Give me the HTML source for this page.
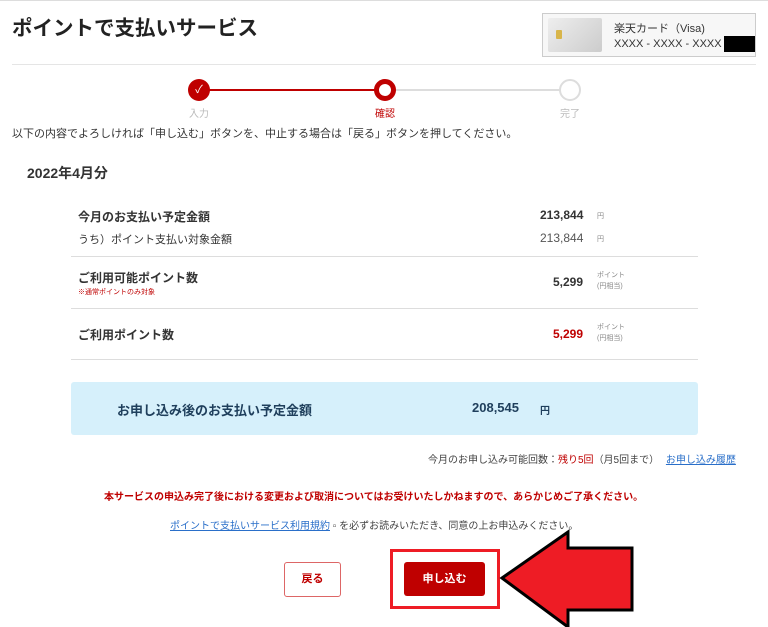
<!DOCTYPE html>
<html><head><meta charset="utf-8"><style>
*{margin:0;padding:0;box-sizing:border-box}
body{width:768px;height:627px;overflow:hidden;background:#fff;font-family:"Liberation Sans","Noto Sans CJK JP",sans-serif;color:#333;position:relative}
.a{position:absolute;white-space:nowrap}
</style></head><body>
<div class="a" style="left:0;top:0;width:768px;height:1px;background:#ddd"></div>
<div class="a" style="left:12px;top:11px;font-size:20.5px;font-weight:bold;color:#222">ポイントで支払いサービス</div>
<div class="a" style="left:542px;top:13px;width:214px;height:44px;border:1px solid #ccc;background:#f7f7f7"></div>
<div class="a" style="left:548px;top:18px;width:54px;height:34px;background:linear-gradient(135deg,#eee,#ccc);border-radius:2px"></div>
<div class="a" style="left:556px;top:30px;width:6px;height:9px;background:#d8b54a;border-radius:1px"></div>
<div class="a" style="left:614px;top:20px;font-size:11px;color:#333">楽天カード（Visa)</div>
<div class="a" style="left:614px;top:38px;font-size:11px;color:#333">XXXX - XXXX - XXXX -</div>
<div class="a" style="left:724px;top:36px;width:31px;height:16px;background:#000"></div>
<div class="a" style="left:12px;top:64px;width:744px;height:1px;background:#e5e5e5"></div>
<div class="a" style="left:199px;top:89px;width:186px;height:2px;background:#bf0000"></div>
<div class="a" style="left:385px;top:89px;width:184px;height:2px;background:#ddd"></div>
<div class="a" style="left:188px;top:79px;width:22px;height:22px;border-radius:50%;background:#bf0000;color:#fff;font-size:11px;text-align:center;line-height:22px">✓</div>
<div class="a" style="left:374px;top:79px;width:22px;height:22px;border-radius:50%;border:5px solid #bf0000;background:#fff"></div>
<div class="a" style="left:559px;top:79px;width:22px;height:22px;border-radius:50%;border:2px solid #ddd;background:#fff"></div>
<div class="a" style="left:189px;top:105px;font-size:10px;color:#bbb">入力</div>
<div class="a" style="left:375px;top:105px;font-size:10px;color:#bf0000">確認</div>
<div class="a" style="left:560px;top:105px;font-size:10px;color:#bbb">完了</div>
<div class="a" style="left:12px;top:125px;font-size:11px;color:#333">以下の内容でよろしければ「申し込む」ボタンを、中止する場合は「戻る」ボタンを押してください。</div>
<div class="a" style="left:27px;top:163px;font-size:14px;font-weight:bold;color:#333">2022年4月分</div>
<div class="a" style="left:78px;top:208px;font-size:12px;font-weight:bold">今月のお支払い予定金額</div>
<div class="a" style="left:540px;top:208px;font-size:12px;font-weight:bold">213,844</div>
<div class="a" style="left:597px;top:211px;font-size:7px;color:#888">円</div>
<div class="a" style="left:78px;top:231px;font-size:11px">うち）ポイント支払い対象金額</div>
<div class="a" style="left:540px;top:231px;font-size:12px;color:#555">213,844</div>
<div class="a" style="left:597px;top:234px;font-size:7px;color:#888">円</div>
<div class="a" style="left:71px;top:256px;width:627px;height:1px;background:#ddd"></div>
<div class="a" style="left:78px;top:269px;font-size:12px;font-weight:bold">ご利用可能ポイント数</div>
<div class="a" style="left:78px;top:287px;font-size:7px;color:#bf0000">※通常ポイントのみ対象</div>
<div class="a" style="left:553px;top:275px;font-size:12px;font-weight:bold">5,299</div>
<div class="a" style="left:597px;top:270px;font-size:7px;color:#888;line-height:11px">ポイント<br>(円相当)</div>
<div class="a" style="left:71px;top:308px;width:627px;height:1px;background:#ddd"></div>
<div class="a" style="left:78px;top:326px;font-size:12px;font-weight:bold">ご利用ポイント数</div>
<div class="a" style="left:553px;top:327px;font-size:12px;font-weight:bold;color:#bf0000">5,299</div>
<div class="a" style="left:597px;top:322px;font-size:7px;color:#888;line-height:11px">ポイント<br>(円相当)</div>
<div class="a" style="left:71px;top:359px;width:627px;height:1px;background:#ddd"></div>
<div class="a" style="left:71px;top:382px;width:627px;height:53px;background:#d6f0fb;border-radius:3px"></div>
<div class="a" style="left:117px;top:400px;font-size:13px;font-weight:bold;color:#1f3f5c">お申し込み後のお支払い予定金額</div>
<div class="a" style="left:472px;top:400px;font-size:13px;font-weight:bold;color:#1f3f5c">208,545</div>
<div class="a" style="left:540px;top:402px;font-size:10px;font-weight:bold;color:#1f3f5c">円</div>
<div class="a" style="left:428px;top:451px;font-size:10px;color:#444">今月のお申し込み可能回数：<span style="color:#bf0000">残り5回</span>（月5回まで） <span style="color:#2a6fc9;text-decoration:underline;margin-left:4px">お申し込み履歴</span></div>
<div class="a" style="left:104px;top:488px;font-size:10px;font-weight:bold;color:#bf0000">本サービスの申込み完了後における変更および取消についてはお受けいたしかねますので、あらかじめご了承ください。</div>
<div class="a" style="left:170px;top:517px;font-size:10px;color:#444"><span style="color:#2a6fc9;text-decoration:underline">ポイントで支払いサービス利用規約</span> ▫ を必ずお読みいただき、同意の上お申込みください。</div>
<div class="a" style="left:284px;top:562px;width:57px;height:35px;border:1px solid #d66;border-radius:3px;color:#bf0000;font-size:11px;font-weight:bold;text-align:center;line-height:33px">戻る</div>
<div class="a" style="left:390px;top:549px;width:110px;height:60px;border:3px solid #ee1c25"></div>
<div class="a" style="left:404px;top:562px;width:81px;height:34px;background:#bf0000;border-radius:3px;color:#fff;font-size:11px;font-weight:bold;text-align:center;line-height:34px">申し込む</div>
<svg class="a" style="left:0;top:0" width="768" height="627"><polygon points="502,578 568,532 568,548 632,548 632,610 568,610 568,627 502,578" fill="#ee1c25" stroke="#000" stroke-width="3" stroke-linejoin="miter"/></svg>
</body></html>
